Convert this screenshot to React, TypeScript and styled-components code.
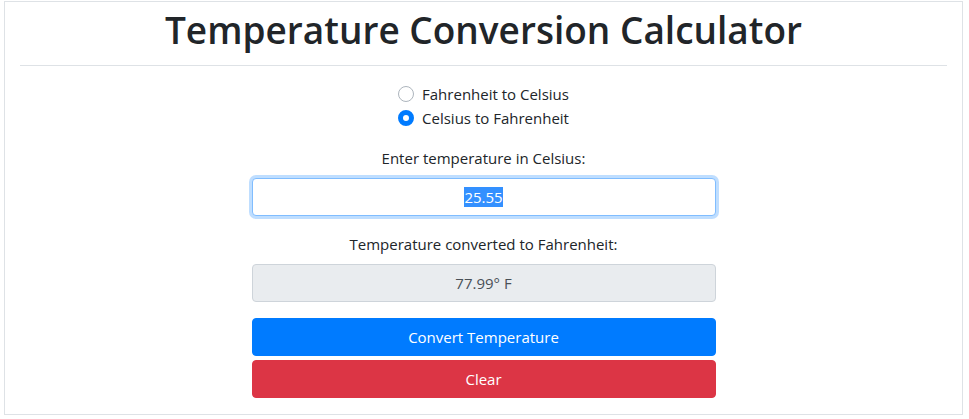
import React, { useEffect, useRef, useState } from "react";
import styled, { createGlobalStyle } from "styled-components";

const GlobalStyle = createGlobalStyle`
  * {
    box-sizing: border-box;
  }
  body {
    margin: 0;
    background: #fff;
    font-family: "Open Sans", "Noto Sans", sans-serif;
    font-size: 15px;
    line-height: 1.5;
    color: #212529;
  }
`;

const Page = styled.div`
  padding: 1px 6px 0 4px;
`;

const Card = styled.div`
  border: 1px solid #dee2e6;
  height: 414px;
  padding: 0 15px;
`;

const Title = styled.h1`
  margin: 0;
  padding-top: 4px;
  font-size: 37px;
  font-weight: 600;
  line-height: 48px;
  text-align: center;
  color: #212529;
`;

const Divider = styled.hr`
  margin: 11px 0 0;
  border: 0;
  border-top: 1px solid #dee2e6;
`;

const Form = styled.div`
  width: 464px;
  margin: 0 auto;
  padding-top: 16px;
  display: flex;
  flex-direction: column;
  align-items: stretch;
`;

const RadioGroup = styled.div`
  display: flex;
  flex-direction: column;
  align-items: center;
`;

const RadioRow = styled.label`
  display: flex;
  align-items: center;
  gap: 8px;
  height: 24px;
  cursor: pointer;
`;

const RadioDot = styled.span<{ $checked: boolean }>`
  width: 16px;
  height: 16px;
  border-radius: 50%;
  border: ${(p) => (p.$checked ? "5px solid #007bff" : "1px solid #adb5bd")};
  background: #fff;
  flex-shrink: 0;
`;

const FieldLabel = styled.div<{ $top: number }>`
  margin-top: ${(p) => p.$top}px;
  text-align: center;
  line-height: 24px;
`;

const TextInput = styled.input<{ $readOnlyLook?: boolean }>`
  display: block;
  width: 100%;
  height: 38px;
  margin-top: 8px;
  padding: 6px 12px;
  font-family: inherit;
  font-size: 15px;
  text-align: center;
  color: #495057;
  background: ${(p) => (p.$readOnlyLook ? "#e9ecef" : "#fff")};
  border: 1px solid #ced4da;
  border-radius: 4px;
  outline: none;

  &:focus {
    border-color: #80bdff;
    box-shadow: 0 0 0 3px rgba(0, 123, 255, 0.25);
  }
  &::selection {
    background: #3390ff;
    color: #fff;
  }
`;

const Button = styled.button<{ $variant: "primary" | "danger"; $top: number }>`
  display: block;
  width: 100%;
  height: 38px;
  margin-top: ${(p) => p.$top}px;
  border: 1px solid ${(p) => (p.$variant === "primary" ? "#007bff" : "#dc3545")};
  border-radius: 4px;
  background: ${(p) => (p.$variant === "primary" ? "#007bff" : "#dc3545")};
  color: #fff;
  font-family: inherit;
  font-size: 15px;
  line-height: 24px;
  cursor: pointer;
`;

const App = () => {
  const [mode, setMode] = useState<"ftc" | "ctf">("ctf");
  const [value, setValue] = useState("25.55");
  const inputRef = useRef<HTMLInputElement>(null);

  useEffect(() => {
    inputRef.current?.focus();
    inputRef.current?.select();
  }, []);

  const num = parseFloat(value);
  const result = isNaN(num)
    ? ""
    : mode === "ctf"
    ? `${(num * 1.8 + 32).toFixed(2)}° F`
    : `${((num - 32) / 1.8).toFixed(2)}° C`;

  return (
    <>
      <GlobalStyle />
      <Page>
        <Card>
          <Title>Temperature Conversion Calculator</Title>
          <Divider />
          <Form>
            <RadioGroup>
              <RadioRow onClick={() => setMode("ftc")}>
                <RadioDot $checked={mode === "ftc"} />
                Fahrenheit to Celsius
              </RadioRow>
              <RadioRow onClick={() => setMode("ctf")}>
                <RadioDot $checked={mode === "ctf"} />
                Celsius to Fahrenheit
              </RadioRow>
            </RadioGroup>
            <FieldLabel $top={16}>
              Enter temperature in {mode === "ctf" ? "Celsius" : "Fahrenheit"}:
            </FieldLabel>
            <TextInput
              ref={inputRef}
              value={value}
              onChange={(e) => setValue(e.target.value)}
            />
            <FieldLabel $top={16}>
              Temperature converted to {mode === "ctf" ? "Fahrenheit" : "Celsius"}:
            </FieldLabel>
            <TextInput $readOnlyLook readOnly value={result} tabIndex={-1} />
            <Button $variant="primary" $top={16}>
              Convert Temperature
            </Button>
            <Button $variant="danger" $top={4} onClick={() => setValue("")}>
              Clear
            </Button>
          </Form>
        </Card>
      </Page>
    </>
  );
};

export default App;
